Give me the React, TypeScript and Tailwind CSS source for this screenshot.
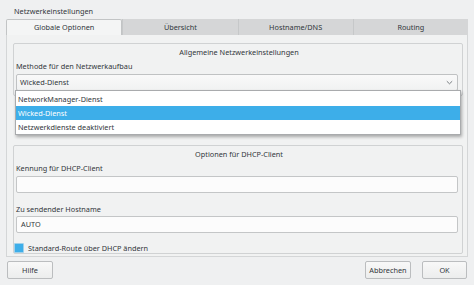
import React from 'react';

const tabs = ['Globale Optionen', 'Übersicht', 'Hostname/DNS', 'Routing'];
const methods = ['NetworkManager-Dienst', 'Wicked-Dienst', 'Netzwerkdienste deaktiviert'];

function Chevron() {
  return (
    <svg width="7" height="5" viewBox="0 0 7 5" className="shrink-0">
      <path d="M0.8 1.2 L3.5 3.8 L6.2 1.2" fill="none" stroke="#6b7075" strokeWidth="0.9" />
    </svg>
  );
}

function Button({ label, className }: { label: string; className?: string }) {
  return (
    <div
      className={
        'h-[18px] flex items-center justify-center rounded-[2px] border border-[#bbbdbf] bg-gradient-to-b from-[#f8f8f8] to-[#eceded] text-[#31363b] ' +
        (className || '')
      }
    >
      {label}
    </div>
  );
}

function TextField({ value }: { value?: string }) {
  return (
    <div className="h-[17px] mr-[4px] flex items-center pl-[4px] rounded-[2px] border border-[#c4c6c7] bg-[#fcfcfc]">
      {value}
    </div>
  );
}

export default function App() {
  return (
    <div
      className="w-[474px] h-[285px] overflow-hidden bg-[#eff0f1] text-[7.3px] text-[#31363b]"
      style={{ fontFamily: '"Noto Sans", "DejaVu Sans", sans-serif' }}
    >
      <div className="h-[19px] pt-[6px] pl-[14px] leading-[10px]">Netzwerkeinstellungen</div>

      <div className="flex h-[16px] mx-[6px]">
        {tabs.map((t, i) => (
          <div
            key={t}
            className={
              i === 0
                ? 'flex-1 flex items-center justify-center border border-b-0 border-[#c2c4c5] bg-[#f4f5f5] rounded-t-[2px]'
                : 'flex-1 flex items-center justify-center bg-[#d5d6d7] border-l border-[#c6c8c9]'
            }
          >
            {t}
          </div>
        ))}
      </div>

      <div className="mx-[6px] h-[222px] border border-t-0 border-[#d4d6d7] bg-[#f1f2f2] pt-[8px] pl-[6px] pr-[4px]">
        <div className="border border-[#d0d2d3] rounded-[2px] pl-[2px] pt-[3px] pb-[4px]">
          <div className="h-[10px] leading-[10px] text-center">Allgemeine Netzwerkeinstellungen</div>
          <div className="mt-[4px] h-[10px] leading-[10px]">Methode für den Netzwerkaufbau</div>
          <div className="relative mt-[3px] mr-[4px] h-[17px]">
            <div className="h-full flex items-center justify-between pl-[3px] pr-[4px] rounded-[2px] border border-[#c0c2c3] bg-gradient-to-b from-[#f9f9f9] to-[#f1f2f2]">
              <span>Wicked-Dienst</span>
              <Chevron />
            </div>
            <div className="absolute z-10 top-[16px] left-[-1px] w-[446px] border border-[#a9abad] bg-white pt-[1px] shadow-[1px_2px_3px_rgba(0,0,0,0.3)]">
              {methods.map((m) => (
                <div
                  key={m}
                  className={
                    m === 'Wicked-Dienst'
                      ? 'h-[14px] flex items-center pl-[2px] bg-[#3daee9] text-white'
                      : 'h-[14px] flex items-center pl-[2px]'
                  }
                >
                  {m}
                </div>
              ))}
            </div>
          </div>
        </div>

        <div className="mt-[49px] border border-[#d0d2d3] rounded-[2px] pl-[2px] pt-[3px]">
          <div className="h-[10px] leading-[10px] text-center">Optionen für DHCP-Client</div>
          <div className="mt-[4px] h-[10px] leading-[10px]">Kennung für DHCP-Client</div>
          <div className="mt-[3px]">
            <TextField />
          </div>
          <div className="mt-[11px] h-[10px] leading-[10px]">Zu sendender Hostname</div>
          <div className="mt-[2px]">
            <TextField value="AUTO" />
          </div>
          <div className="mt-[10px] h-[10px] flex items-center gap-[4px] ml-[-2px]">
            <div className="w-[10px] h-[10px] rounded-[1px] border border-[#9fd0ea] bg-[#3daee9]" />
            <span className="leading-[10px]">Standard-Route über DHCP ändern</span>
          </div>
        </div>
      </div>

      <div className="mt-[4px] flex px-[7px]">
        <Button label="Hilfe" className="w-[46px]" />
        <div className="flex-1" />
        <Button label="Abbrechen" className="w-[46px]" />
        <Button label="OK" className="w-[45px] ml-[11px]" />
      </div>
    </div>
  );
}
